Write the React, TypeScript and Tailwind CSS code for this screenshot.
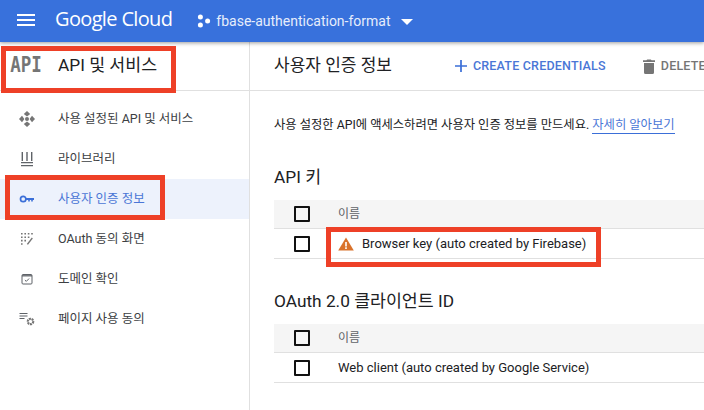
const font = "font-['Roboto','Noto_Sans_CJK_KR',sans-serif]";

function ApiIcon() {
  return (
    <span className="block scale-y-[1.25] font-['DejaVu_Sans_Mono',monospace] text-[17.5px] leading-none font-bold text-[#757575]">
      API
    </span>
  );
}

const icons: Record<string, React.ReactNode> = {
  enabled: (
    <svg width="18" height="18" viewBox="0 0 18 18" fill="#757575">
      <path d="M9 1 12.2 4 9 6.4 5.8 4Z" />
      <path d="M9 17 12.2 14 9 11.6 5.8 14Z" />
      <path d="M1 9 4 5.8 6.4 9 4 12.2Z" />
      <path d="M17 9 14 5.8 11.6 9 14 12.2Z" />
      <circle cx="9" cy="9" r="2" />
    </svg>
  ),
  library: (
    <svg width="18" height="18" viewBox="0 0 18 18" fill="#5f6368">
      <path d="M3.6 2h1.4v9H3.6zM8.3 2h1.4v9H8.3zM13 2h1.4v9H13zM3 12h12v1.3H3zM3 15h12v1.3H3z" />
    </svg>
  ),
  key: (
    <svg width="16" height="16" viewBox="0 0 16 16" fill="none">
      <circle cx="4.2" cy="8" r="2.7" stroke="#3b6fd8" strokeWidth="1.7" />
      <path d="M7 7h8v2h-1.2v1.6h-1.6V9h-1.4v1.6H9.2V9H7z" fill="#3b6fd8" />
    </svg>
  ),
  oauth: (
    <svg width="14" height="14" viewBox="0 0 14 14" fill="#757575">
      <path d="M1 1h1.6v1.6H1zM4.4 1H6v1.6H4.4zM7.8 1h1.6v1.6H7.8zM11.2 1h1.6v1.6h-1.6zM1 4.4h1.6V6H1zM4.4 4.4H6V6H4.4zM7.8 4.4h1.6V6H7.8zM1 7.8h1.6v1.6H1zM4.4 7.8H6v1.6H4.4zM1 11.2h1.6v1.6H1z" />
      <path d="M6.8 12 11.8 5.6l1 .8-4.8 6.4z" />
    </svg>
  ),
  domain: (
    <svg width="12" height="12" viewBox="0 0 12 12" fill="none" stroke="#5f6368" strokeWidth="1">
      <rect x="1" y="1.5" width="10" height="9.5" rx="1" />
      <path d="M1 2.8h10" strokeWidth="1.3" />
      <path d="M3.9 7 5.3 8.4 8.1 5.5" />
    </svg>
  ),
  consent: (
    <svg width="18" height="18" viewBox="0 0 18 18" fill="none">
      <path d="M1.5 3.5h8M1.5 6h8M1.5 8.5h5" stroke="#5f6368" strokeWidth="1" />
      <circle cx="12.5" cy="11.5" r="2.7" stroke="#757575" strokeWidth="2.2" strokeDasharray="2 0.7" />
    </svg>
  ),
};

const navItems = [
  { id: "enabled", label: "사용 설정된 API 및 서비스" },
  { id: "library", label: "라이브러리" },
  { id: "key", label: "사용자 인증 정보", active: true },
  { id: "oauth", label: "OAuth 동의 화면" },
  { id: "domain", label: "도메인 확인" },
  { id: "consent", label: "페이지 사용 동의" },
];

function Box() {
  return <span className="block size-[16px] rounded-[1px] border-2 border-[#111]" />;
}

function KeyTable({ children }: { children: React.ReactNode }) {
  return (
    <div className="text-[13px]">
      <div className="flex h-[29px] items-center border-b border-[#e0e0e0] bg-[#f5f5f5] text-[#5f6368]">
        <span className="flex w-[64px] justify-center pr-[8px]">
          <Box />
        </span>
        <span className="text-[12px]">이름</span>
      </div>
      <div className="flex h-[30px] items-center border-b border-[#e0e0e0] text-[#202124]">
        <span className="flex w-[64px] justify-center pr-[8px]">
          <Box />
        </span>
        {children}
      </div>
    </div>
  );
}

export default function App() {
  return (
    <div className={`relative h-[410px] w-[704px] overflow-hidden bg-white ${font}`}>
      <header className="relative z-10 flex h-[42px] items-center bg-[#3871dc] text-white shadow-[0_1px_4px_rgba(0,0,0,0.4)]">
        <span className="ml-[17px] flex w-[18px] flex-col gap-[3px] pb-[3px]">
          <i className="h-[2px] bg-white" />
          <i className="h-[2px] bg-white" />
          <i className="h-[2px] bg-white" />
        </span>
        <span className="mb-[5px] ml-[20px] font-['Open_Sans',sans-serif] text-[20px] tracking-[-0.65px]">
          Google Cloud
        </span>
        <svg className="ml-[25px]" width="14" height="14" viewBox="0 0 14 14" fill="white">
          <circle cx="3.4" cy="2.9" r="2.5" />
          <circle cx="3.4" cy="11" r="2.5" />
          <circle cx="10.6" cy="7" r="2.5" />
        </svg>
        <span className="ml-[5px] text-[14px] text-[#e6edfb]">fbase-authentication-format</span>
        <span className="mt-[1px] ml-[10px] size-0 border-x-[6px] border-t-[6px] border-x-transparent border-t-white" />
      </header>

      <div className="flex h-[368px]">
        <aside className="w-[250px] shrink-0 border-r border-[#e0e0e0]">
          <div className="flex h-[49px] items-center border-b border-[#e0e0e0]">
            <span className="flex w-[58px] justify-center pr-[16px] pl-[10px]">
              <ApiIcon />
            </span>
            <span className="text-[17.3px] text-[#202124]">API 및 서비스</span>
          </div>
          <nav className="pt-[8px]">
            {navItems.map((item) => (
              <div
                key={item.id}
                className={`flex h-[40px] items-center text-[12.5px] ${
                  item.active ? "bg-[#edf2fc] text-[#4a76d6]" : "text-[#3c4043]"
                }`}
              >
                <span className="flex w-[58px] justify-center pr-[6px] pl-[2px]">{icons[item.id]}</span>
                {item.label}
              </div>
            ))}
          </nav>
        </aside>

        <main className="min-w-0 flex-1">
          <div className="flex h-[49px] items-center border-b border-[#e0e0e0] pl-[24px] whitespace-nowrap">
            <span className="text-[17px] text-[#202124]">사용자 인증 정보</span>
            <svg className="ml-[63px] shrink-0" width="12" height="12" viewBox="0 0 14 14" fill="#3b6fd8">
              <path d="M6 0h2v6h6v2H8v6H6V8H0V6h6z" />
            </svg>
            <span className="ml-[6px] text-[12.5px] font-medium tracking-[0.2px] text-[#4a76d6]">CREATE CREDENTIALS</span>
            <svg className="ml-[37px] shrink-0" width="12" height="15" viewBox="0 0 12 15" fill="#757575">
              <path d="M1 4h10v9.5A1.5 1.5 0 0 1 9.5 15h-7A1.5 1.5 0 0 1 1 13.5zM0 1.3h3.4L4.2.4h3.6l.8.9H12V3H0z" />
            </svg>
            <span className="ml-[6px] text-[12.5px] font-medium tracking-[0.2px] text-[#757575]">DELETE</span>
          </div>
          <div className="pl-[24px]">
            <p className="mt-[25px] text-[12.3px] leading-[18px] whitespace-nowrap text-[#202124]">
              사용 설정한 API에 액세스하려면 사용자 인증 정보를 만드세요.{" "}
              <span className="border-b border-[#3b6fd8] pb-[1px] text-[#4a76d6]">자세히 알아보기</span>
            </p>
            <h2 className="mt-[33px] mb-[13px] text-[17.3px] leading-[20px] text-[#202124]">API 키</h2>
            <KeyTable>
              <svg width="16" height="14" viewBox="0 0 16 14" className="mr-[8px]">
                <path d="M8 0.5 15.8 13.5H0.2Z" fill="#d9722b" />
                <path d="M7.2 5h1.6v4.4H7.2zM7.2 10.3h1.6v1.6H7.2z" fill="#fff" />
              </svg>
              <span>Browser key (auto created by Firebase)</span>
            </KeyTable>
            <h2 className="mt-[32px] mb-[13px] text-[17.3px] leading-[20px] text-[#202124]">OAuth 2.0 클라이언트 ID</h2>
            <KeyTable>
              <span>Web client (auto created by Google Service)</span>
            </KeyTable>
          </div>
        </main>
      </div>

      {/* red annotation boxes */}
      <div className="absolute top-[46px] left-[1px] z-20 h-[47px] w-[175px] border-[5px] border-[#ee4027]" />
      <div className="absolute top-[175px] left-[5px] z-20 h-[45px] w-[160px] border-[5px] border-[#ee4027]" />
      <div className="absolute top-[227px] left-[326px] z-20 h-[40px] w-[275px] border-[5px] border-[#ee4027]" />
    </div>
  );
}
